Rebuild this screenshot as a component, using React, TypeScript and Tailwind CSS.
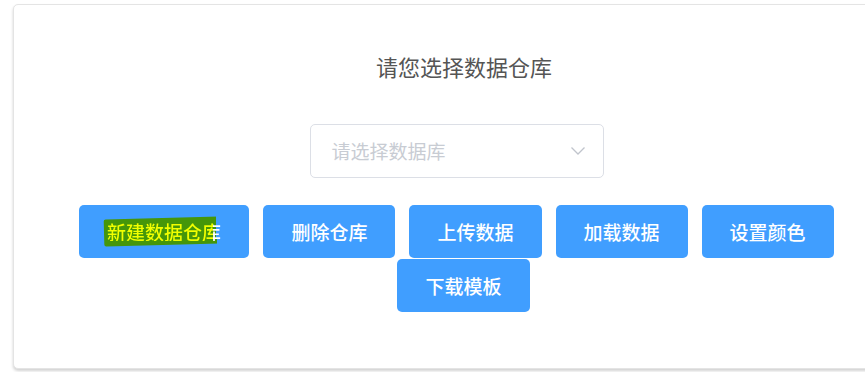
import React from "react";

const font = { fontFamily: '"Noto Sans CJK SC", "Microsoft YaHei", sans-serif' };

function Btn({ children, first }: { children: React.ReactNode; first?: boolean }) {
  return (
    <button
      className={
        "h-[53px] px-[28px] rounded-[5px] bg-[#409eff] text-white text-[19px] font-medium leading-none whitespace-nowrap " +
        (first ? "" : "ml-[14px]")
      }
    >
      {children}
    </button>
  );
}

export default function App() {
  return (
    <div className="w-[865px] h-[372px] overflow-hidden bg-white" style={font}>
      <div className="ml-[13px] mt-[4px] w-[887px] h-[365px] rounded-[5px] border border-[#e4e4e4] bg-white shadow-[0_2px_3px_rgba(0,0,0,0.18)] flex flex-col items-center pt-[46px]">
        <div className="pl-[15px] text-[22px] leading-[30px] text-[#555]">请您选择数据仓库</div>
        <div className="mt-[43px] w-[294px] h-[54px] rounded-[5px] border border-[#dcdfe6] flex items-center justify-between pl-[21px] pr-[17px]">
          <span className="text-[19px] text-[#c8ccd3]">请选择数据库</span>
          <svg width="16" height="10" viewBox="0 0 16 10" fill="none">
            <path d="M1.5 1.5 L8 8 L14.5 1.5" stroke="#c0c4cc" strokeWidth="1.3" />
          </svg>
        </div>
        <div className="mt-[27px] w-full flex flex-wrap justify-center gap-y-[1px]">
          <Btn first>
            <span className="inline-block -ml-[3px] pl-[3px] py-[4px] -my-[4px] bg-[linear-gradient(to_right,#45960a_0,#45960a_96%,transparent_96%)] -rotate-[1.5deg] rounded-[2px]">
              <span className="inline-block rotate-[1.5deg] bg-[linear-gradient(to_right,#f2ff00_0,#f2ff00_93%,#ffffff_93%)] bg-clip-text text-transparent">
                新建数据仓库
              </span>
            </span>
          </Btn>
          <Btn>删除仓库</Btn>
          <Btn>上传数据</Btn>
          <Btn>加载数据</Btn>
          <Btn>设置颜色</Btn>
          <Btn>下载模板</Btn>
        </div>
      </div>
    </div>
  );
}
